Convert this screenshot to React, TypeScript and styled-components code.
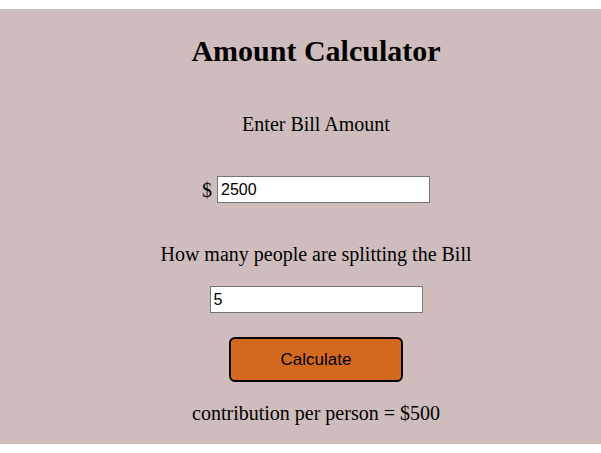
import React, { useState } from "react";
import styled, { createGlobalStyle } from "styled-components";

const GlobalStyle = createGlobalStyle`
    html, body {
        margin: 0;
        padding: 0;
        background: #ffffff;
    }
    body {
        padding-top: 9px;
        font-family: "Liberation Serif", "Times New Roman", serif;
    }
`;

const App = () => {
    const [bill, setBill] = useState("2500");
    const [people, setPeople] = useState("5");
    const [share, setShare] = useState(500);

    const calculate = () => {
        const b = parseFloat(bill);
        const p = parseFloat(people);
        if (!isNaN(b) && !isNaN(p) && p > 0) {
            setShare(Math.round((b / p) * 100) / 100);
        }
    };

    return (
        <>
            <GlobalStyle />
            <Container>
                <Title>Amount Calculator</Title>
                <Label>Enter Bill Amount</Label>
                <InputRow>
                    <Currency>$</Currency>
                    <Field value={bill} onChange={(e) => setBill(e.target.value)} />
                </InputRow>
                <Label $top={39}>How many people are splitting the Bill</Label>
                <InputRow $top={20}>
                    <Field value={people} onChange={(e) => setPeople(e.target.value)} />
                </InputRow>
                <CalcButton onClick={calculate}>Calculate</CalcButton>
                <Result>contribution per person = ${share}</Result>
            </Container>
        </>
    );
};

export default App;

const Container = styled.main`
    display: flex;
    flex-direction: column;
    align-items: center;
    width: 100%;
    box-sizing: border-box;
    padding: 24px 0 19px 31px;
    background-color: #cfbdbd;
    color: #000;
`;

const Title = styled.h1`
    margin: 0;
    font-size: 30px;
    line-height: 36px;
    font-weight: bold;
`;

const Label = styled.p<{ $top?: number }>`
    margin: ${(p) => p.$top ?? 43}px 0 0;
    font-size: 20px;
    line-height: 24px;
`;

const InputRow = styled.div<{ $top?: number }>`
    display: flex;
    align-items: center;
    gap: 5px;
    margin-top: ${(p) => p.$top ?? 40}px;
`;

const Currency = styled.span`
    font-size: 20px;
    line-height: 24px;
`;

const Field = styled.input`
    box-sizing: border-box;
    width: 213px;
    height: 27px;
    padding: 1px 3px;
    border: 1px solid #767676;
    border-radius: 0;
    background: #fff;
    font-family: "Liberation Sans", Arial, sans-serif;
    font-size: 16px;
    color: #000;
    outline: none;
`;

const CalcButton = styled.button`
    box-sizing: border-box;
    width: 174px;
    height: 45px;
    margin-top: 24px;
    border: 2px solid #000;
    border-radius: 6px;
    background-color: #d2691e;
    font-family: "Liberation Sans", Arial, sans-serif;
    font-size: 17px;
    color: #000;
    cursor: pointer;
`;

const Result = styled.p`
    margin: 19px 0 0;
    font-size: 20px;
    line-height: 24px;
`;
